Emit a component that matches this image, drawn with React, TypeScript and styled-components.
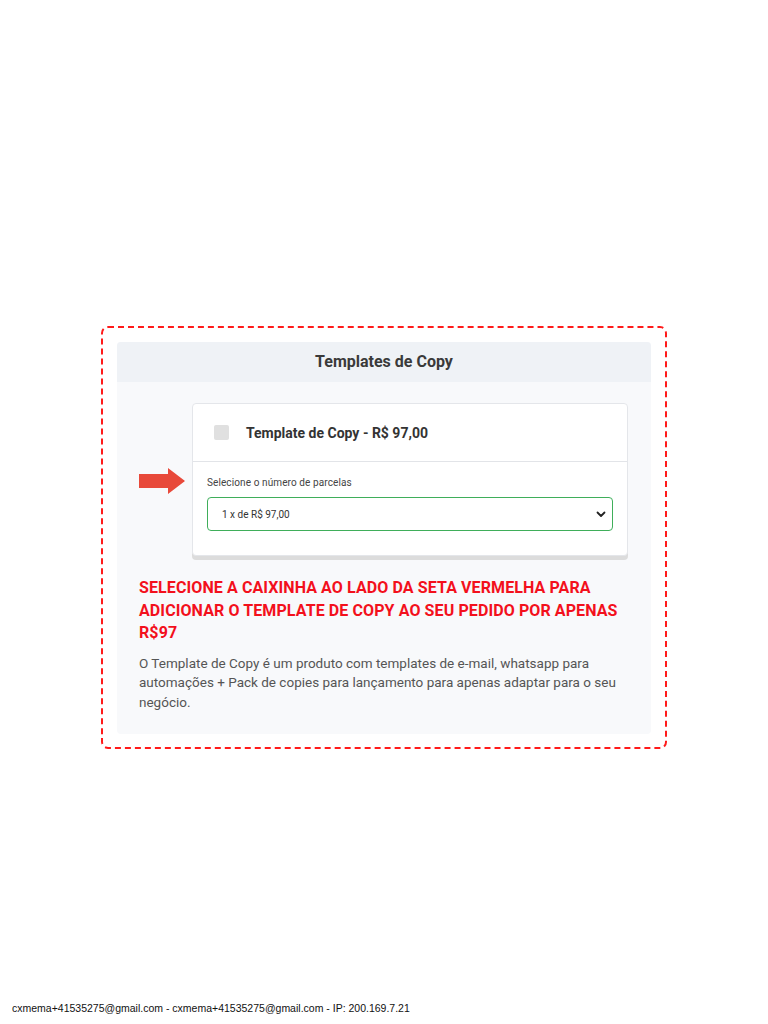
import React from "react";
import styled, { createGlobalStyle } from "styled-components";

const Global = createGlobalStyle`
  html, body { margin: 0; padding: 0; background: #fff; }
  body { font-family: Roboto, "Liberation Sans", Arial, sans-serif; }
`;

const Page = styled.div`
  width: 768px;
  height: 1024px;
  display: flex;
  flex-direction: column;
  box-sizing: border-box;
  padding-top: 326px;
`;

const Frame = styled.div`
  margin-left: 101px;
  width: 566px;
  height: 423px;
  box-sizing: border-box;
  border: 2.5px dashed #ff1a1a;
  border-radius: 7px;
  padding: 14px 14px 0 14px;
`;

const Card = styled.div`
  width: 534px;
  border-radius: 4px;
  overflow: hidden;
  background: #f8f9fb;
`;

const Header = styled.div`
  height: 40px;
  background: #eff2f6;
  display: flex;
  align-items: center;
  justify-content: center;
  font-size: 16px;
  font-weight: 700;
  color: #3a3a3a;
  padding-bottom: 1px;
  box-sizing: border-box;
`;

const Body = styled.div`
  padding: 21px 22px 22px 22px;
  display: flex;
  flex-direction: column;
`;

const ProductRow = styled.div`
  display: flex;
  align-items: flex-start;
`;

const ArrowCol = styled.div`
  width: 53px;
  padding-top: 65px;
  display: flex;
`;

const Product = styled.div`
  width: 436px;
  background: #fff;
  border: 1px solid #e4e6ea;
  border-radius: 4px;
  box-sizing: border-box;
  box-shadow: 0 4px 0 #dcdcdc;
`;

const ProductTop = styled.div`
  height: 57px;
  display: flex;
  align-items: center;
  padding-left: 21px;
  border-bottom: 1px solid #e2e4e8;
`;

const Check = styled.span`
  width: 15px;
  height: 15px;
  border-radius: 2px;
  background: #e0e0e0;
  margin-right: 17px;
`;

const ProductTitle = styled.span`
  font-size: 14px;
  font-weight: 700;
  color: #333;
`;

const ProductBottom = styled.div`
  padding: 14px 14px 24px 14px;
`;

const Label = styled.div`
  font-size: 10px;
  color: #444;
  margin-bottom: 9px;
  padding-top: 1px;
  letter-spacing: 0.1px;
`;

const Select = styled.div`
  height: 34px;
  box-sizing: border-box;
  border: 1.5px solid #3fae5a;
  border-radius: 4px;
  display: flex;
  align-items: center;
  justify-content: space-between;
  padding: 0 5px 0 14px;
  font-size: 10px;
  color: #333;
`;

const Heading = styled.div`
  margin-top: 21px;
  font-size: 16px;
  line-height: 22.5px;
  font-weight: 700;
  color: #f3101c;
  letter-spacing: 0.1px;
`;

const Para = styled.p`
  margin: 9px 0 0 0;
  font-size: 13.5px;
  line-height: 19.5px;
  color: #555;
`;

const Footer = styled.div`
  margin-top: auto;
  margin-bottom: 10px;
  padding-left: 12px;
  font-family: "Liberation Sans", Arial, sans-serif;
  font-size: 10.5px;
  color: #111;
`;

export default function App() {
  return (
    <>
      <Global />
      <Page>
        <Frame>
          <Card>
            <Header>Templates de Copy</Header>
            <Body>
              <ProductRow>
                <ArrowCol>
                  <svg width="47" height="26" viewBox="0 0 47 26">
                    <path d="M0 6 H29 V0 L46 13 L29 26 V20 H0 Z" fill="#e8493a" />
                  </svg>
                </ArrowCol>
                <Product>
                  <ProductTop>
                    <Check />
                    <ProductTitle>Template de Copy - R$ 97,00</ProductTitle>
                  </ProductTop>
                  <ProductBottom>
                    <Label>Selecione o número de parcelas</Label>
                    <Select>
                      <span>1 x de R$ 97,00</span>
                      <svg width="12" height="12" viewBox="0 0 12 12">
                        <path d="M2.5 4.5 L6 8 L9.5 4.5" fill="none" stroke="#222" strokeWidth="1.8" strokeLinecap="round" strokeLinejoin="round" />
                      </svg>
                    </Select>
                  </ProductBottom>
                </Product>
              </ProductRow>
              <Heading>
                SELECIONE A CAIXINHA AO LADO DA SETA VERMELHA PARA ADICIONAR O TEMPLATE DE COPY AO SEU PEDIDO POR APENAS R$97
              </Heading>
              <Para>
                O Template de Copy é um produto com templates de e-mail, whatsapp para automações + Pack de copies para lançamento para apenas adaptar para o seu negócio.
              </Para>
            </Body>
          </Card>
        </Frame>
        <Footer>cxmema+41535275@gmail.com - cxmema+41535275@gmail.com - IP: 200.169.7.21</Footer>
      </Page>
    </>
  );
}
